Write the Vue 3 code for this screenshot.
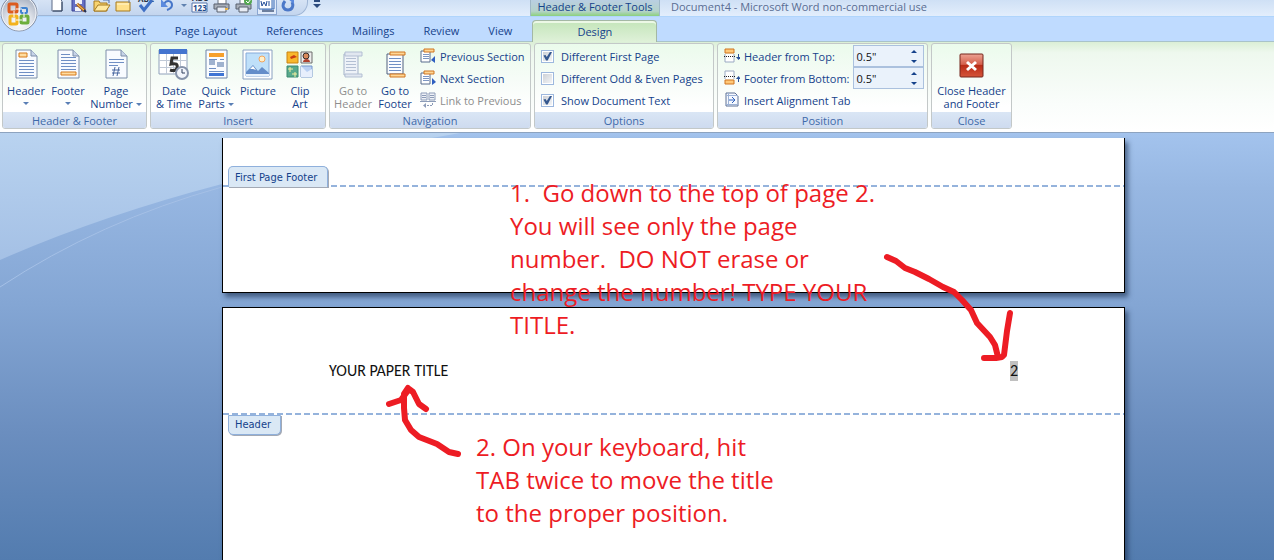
<script setup>
import { ref } from "vue";

const tabs = [
  "Home",
  "Insert",
  "Page Layout",
  "References",
  "Mailings",
  "Review",
  "View",
];

const options = ref([
  { id: "first-page", label: "Different First Page", checked: true },
  { id: "odd-even", label: "Different Odd & Even Pages", checked: false },
  { id: "show-text", label: "Show Document Text", checked: true },
]);

const notes = [
  {
    name: "one",
    lines: [
      "1.  Go down to the top of page 2.",
      "You will see only the page",
      "number.  DO NOT erase or",
      "change the number! TYPE YOUR",
      "TITLE.",
    ],
  },
  {
    name: "two",
    lines: [
      "2. On your keyboard, hit",
      "TAB twice to move the title",
      "to the proper position.",
    ],
  },
];

const headerTop = ref('0.5"');
const footerBottom = ref('0.5"');

const step = (value, delta) =>
  `${Math.max(0, Math.round((parseFloat(value) + delta) * 10) / 10)}"`;
</script>

<template>
  <div class="word">
    <header class="titlebar">
      <div class="quick">
        <button class="tool" aria-label="New">
          <svg width="16" height="16">
            <path d="M3 -2h7l3 3v10H3z" fill="#fff" stroke="#5c6b86" />
            <path d="M13 2v9H4" fill="none" stroke="#30435f" />
          </svg>
        </button>
        <button class="tool" aria-label="Save as">
          <svg width="16" height="16">
            <path d="M1 -1h13v12H1z" fill="#6670c4" stroke="#3b4593" />
            <path d="M4 -1h7v5H4zM4 7h6v4H4z" fill="#eef1fb" />
            <path d="M6 4l8 7" stroke="#b3691e" stroke-width="3" />
            <path d="M6 4l8 7" stroke="#ffd470" />
            <path d="M13 10l2 2" stroke="#243055" stroke-width="2" />
          </svg>
        </button>
        <button class="tool" aria-label="Open">
          <svg width="18" height="16">
            <path d="M1 11V1h5l1 2h7v8z" fill="#f8d36e" stroke="#a67a20" />
            <path d="M1 11l4-6h12l-4 6z" fill="#ffe9a0" stroke="#a67a20" />
            <path d="M10 0h6v3" fill="none" stroke="#4d6fae" />
          </svg>
        </button>
        <button class="tool" aria-label="Close file">
          <svg width="18" height="16">
            <path d="M1 11V2h14v9z" fill="#ffe08a" stroke="#a67a20" />
            <path d="M2 4h12" stroke="#fff5cf" />
            <path d="M8 -1h6v4" fill="none" stroke="#6b7b99" />
          </svg>
        </button>
        <button class="tool" aria-label="Spelling">
          <svg width="18" height="16">
            <text x="1" y="2" font-size="8" font-weight="700" fill="#2a3346">ABC</text>
            <path d="M3 5l4 5 8-10" fill="none" stroke="#3f6fc4" stroke-width="3" />
          </svg>
        </button>
        <button class="tool" aria-label="Undo">
          <svg width="18" height="16">
            <path d="M5 4c3-5 8-3 8 1 0 2-2 4-5 5" fill="none" stroke="#4776c9" stroke-width="2" />
            <path d="M2 -1v8h7z" fill="#5b8ade" />
          </svg>
        </button>
        <button class="tool narrow" aria-label="Undo history">
          <svg width="6" height="16">
            <path d="M0 4h6l-3 3z" fill="#6182b0" />
          </svg>
        </button>
        <button class="tool" aria-label="Word count">
          <svg width="18" height="16">
            <text x="1" y="1" font-size="8" font-weight="700" fill="#2a3346">ABC</text>
            <path d="M1 3h15v9H1z" fill="#fff" stroke="#5676ab" />
            <text x="2" y="11" font-size="8" font-weight="700" fill="#234a8a">123</text>
          </svg>
        </button>
        <button class="tool" aria-label="Quick print">
          <svg width="18" height="16">
            <path d="M5 -2h8v6H5z" fill="#fff" stroke="#68707e" />
            <path d="M1 4h15v5H1z" fill="#a9afb9" stroke="#59616e" />
            <path d="M4 7h9v5H4z" fill="#e8ecf4" stroke="#59616e" />
            <path d="M12 8h3v2h-3z" fill="#e9b44a" />
          </svg>
        </button>
        <button class="tool" aria-label="Print preview">
          <svg width="18" height="16">
            <path d="M5 -2h8v6H5z" fill="#fff" stroke="#68707e" />
            <path d="M1 4h15v5H1z" fill="#a9afb9" stroke="#59616e" />
            <path d="M4 7h9v5H4z" fill="#e8ecf4" stroke="#59616e" />
            <circle cx="13" cy="1" r="4" fill="#54a750" />
            <path d="M11 1l2 2 3-4" fill="none" stroke="#fff" />
          </svg>
        </button>
        <button class="tool pressed" aria-label="Word view">
          <svg width="18" height="16">
            <path d="M4 -2h12v11H4z" fill="#dbe7fa" stroke="#3b6ab3" />
            <path d="M1 -1h13v10H1z" fill="#fff" stroke="#3b6ab3" />
            <path d="M3 1l1 5 2-4 2 4 1-5M11 1v5" fill="none" stroke="#214c98" />
            <path d="M4 11h12" stroke="#6d7f9d" stroke-width="2" />
          </svg>
        </button>
        <button class="tool" aria-label="Repeat">
          <svg width="18" height="16">
            <path d="M4 1c-4 5-1 9 3 9s6-4 4-8" fill="none" stroke="#4c78c8" stroke-width="3" />
            <path d="M6 -2h7v6z" fill="#5b8ade" />
          </svg>
        </button>
      </div>
      <button class="customize" aria-label="Customize toolbar">
        <svg width="8" height="10">
          <path d="M1 1h6" stroke="#2b4a7d" stroke-width="2" />
          <path d="M0 4h8l-4 4z" fill="#2b4a7d" />
        </svg>
      </button>
      <span class="context">Header &amp; Footer Tools</span>
      <h1 class="title">Document4 - Microsoft Word non-commercial use</h1>
    </header>

    <button class="office" aria-label="Office button">
      <svg width="40" height="40" viewBox="0 0 40 40">
        <defs>
          <radialGradient id="orb" cx="50%" cy="75%" r="70%">
            <stop offset="0" stop-color="#fff" />
            <stop offset="0.5" stop-color="#dfe3ea" />
            <stop offset="1" stop-color="#a7b0c0" />
          </radialGradient>
        </defs>
        <circle cx="20" cy="20" r="18" fill="url(#orb)" stroke="#8590a5" />
        <circle cx="20" cy="20" r="17" fill="none" stroke="#f6f8fb" />
        <g fill="none" stroke-width="3">
          <rect x="10" y="11" width="8" height="8" rx="1" stroke="#dc5a1e" />
          <rect x="22" y="15" width="6" height="5" rx="1" stroke="#3f82cf" stroke-width="2" />
          <rect x="11" y="23" width="7" height="8" rx="1" stroke="#f3b21d" />
          <rect x="22" y="23" width="7" height="7" rx="1" stroke="#6cae3c" />
        </g>
        <path d="M17 16h6M17 27h6M15 18v6M25 19v5" stroke="#fff" />
      </svg>
    </button>

    <nav class="tabs">
      <button v-for="tab in tabs" :key="tab" class="tab">{{ tab }}</button>
      <button class="tab active">Design</button>
    </nav>

    <main class="ribbon">
      <section class="group g-hf">
        <div class="body">
          <button class="big">
            <svg width="32" height="32">
              <path d="M6 1h15l6 6v22H6z" fill="#f8fbff" stroke="#7d8ea9" />
              <path d="M21 1v6h6" fill="#c7d4e8" stroke="#7d8ea9" />
              <path d="M9 4h8v4H9z" fill="#ffdca0" stroke="#d77b1b" />
              <path d="M9 11.500h15M9 14.500h15M9 17.500h15M9 20.500h15M9 23.500h15M9 26.500h15" stroke="#6f8fc4" />
            </svg>
            <span>Header</span>
            <i class="caret"></i>
          </button>
          <button class="big">
            <svg width="32" height="32">
              <path d="M6 1h15l6 6v22H6z" fill="#f8fbff" stroke="#7d8ea9" />
              <path d="M21 1v6h6" fill="#c7d4e8" stroke="#7d8ea9" />
              <path d="M9 5.500h9M9 8.500h15M9 11.500h15M9 14.500h15M9 17.500h15M9 20.500h15" stroke="#6f8fc4" />
              <path d="M9 23h15v3H9z" fill="#ffdca0" stroke="#d77b1b" />
            </svg>
            <span>Footer</span>
            <i class="caret"></i>
          </button>
          <button class="big wide">
            <svg width="32" height="32">
              <path d="M6 1h15l6 6v22H6z" fill="#f8fbff" stroke="#7d8ea9" />
              <path d="M21 1v6h6" fill="#c7d4e8" stroke="#7d8ea9" />
              <path d="M9 10.500h15M9 13.500h15M9 16.500h9" stroke="#6f8fc4" />
              <path d="M15 18l-2 9M19 18l-2 9M12 21h8M12 24h8" stroke="#48679f" />
            </svg>
            <span>Page</span>
            <span>Number<i class="caret side"></i></span>
          </button>
        </div>
        <h2>Header &amp; Footer</h2>
      </section>

      <section class="group g-insert">
        <div class="body">
          <button class="big">
            <svg width="32" height="32">
              <path d="M1 1h28v24H1z" fill="#fff" stroke="#8fa0ba" />
              <path d="M1 0h28v5H1z" fill="#4474cf" />
              <path d="M1 11.500h28M1 18.500h28M8.500 5v20M15.500 5v20M22.500 5v20" stroke="#c0c9d6" />
              <path d="M20 9h-6l-1 6c5-1 7 0 6 4-1 3-4 3-7 2" fill="none" stroke="#323232" stroke-width="3" />
              <circle cx="24" cy="24" r="6" fill="#f2f5fb" stroke="#8693aa" stroke-width="2" />
              <path d="M24 20v4h3" fill="none" stroke="#2f3f5d" />
            </svg>
            <span>Date</span>
            <span>&amp; Time</span>
          </button>
          <button class="big">
            <svg width="32" height="32">
              <path d="M6 1h21v28H6z" fill="#fafcff" stroke="#6d83a8" />
              <path d="M9 4h15v4H9z" fill="#f6a02d" />
              <path d="M9 10.500h8M9 13.500h4M20 10.500h4M9 19.500h7M9 22.500h15" stroke="#6f8fc4" />
              <path d="M9 11h6v5H9zM17 13h7v5h-7z" fill="#9fb2cf" />
              <path d="M9 24h15v3H9z" fill="#3f74d4" />
            </svg>
            <span>Quick</span>
            <span>Parts<i class="caret side"></i></span>
          </button>
          <button class="big">
            <svg width="32" height="32">
              <path d="M1 1h29v29H1z" fill="#fff" stroke="#8aa0c0" />
              <path d="M4 4h23v23H4z" fill="#bfe0fa" stroke="#86aad8" />
              <circle cx="20" cy="10" r="3" fill="#fff0cb" stroke="#f2a55e" />
              <path d="M4 23l7-7 5 6 4-4 7 6v3H4z" fill="#648dc9" />
              <path d="M8 20l3-3 3 4-3-1z" fill="#fff" />
              <path d="M4 25h23v2H4z" fill="#e6f1fc" />
            </svg>
            <span>Picture</span>
          </button>
          <button class="big">
            <svg width="32" height="32">
              <path d="M3 3h11v11H3z" fill="#f9b82c" stroke="#c98212" />
              <path d="M6 8l4-2 3 2-6 2z" fill="#c93e13" />
              <path d="M17 3h11v11H17z" fill="#ececec" stroke="#6d6d6d" />
              <circle cx="22" cy="7" r="3" fill="#d98a5c" stroke="#382e2a" />
              <path d="M19 13c0-4 7-4 7 0z" fill="#b0402c" />
              <path d="M3 17h11v11H3z" fill="#58a98c" stroke="#3b8a70" />
              <path d="M6 18v5M4 20h5M11 23v5M8 25h5" stroke="#f5ef9f" />
              <path d="M17 17h11v11H17z" fill="#b9d0f3" stroke="#7495cc" />
              <path d="M17 17l6 6 5-3v8H17z" fill="#e7effc" />
            </svg>
            <span>Clip</span>
            <span>Art</span>
          </button>
        </div>
        <h2>Insert</h2>
      </section>

      <section class="group g-nav">
        <div class="body">
          <button class="big" disabled>
            <svg width="32" height="32">
              <path d="M7 5h14v21H7z" fill="#eef2f8" stroke="#a3b1c8" />
              <path d="M9 9.500h10M9 12.500h10M9 15.500h10M9 18.500h10M9 21.500h10" stroke="#b3bfd3" />
              <path d="M8 3h17v4H8zM8 25h17v3H8z" fill="#e1e7f0" stroke="#b3bfd3" />
            </svg>
            <span>Go to</span>
            <span>Header</span>
          </button>
          <button class="big">
            <svg width="32" height="32">
              <path d="M8 5h16v20H8z" fill="#fafcff" stroke="#50617f" />
              <path d="M10 9.500h12M10 12.500h12M10 15.500h12M10 18.500h12M10 21.500h12" stroke="#6f8fc4" />
              <path d="M11 3h15v3H11zM11 25h15v3H11z" fill="#ffd795" stroke="#cf7520" />
            </svg>
            <span>Go to</span>
            <span>Footer</span>
          </button>
          <div class="rows">
            <button class="row">
              <svg width="16" height="16">
                <path d="M1 3h9v11H1z" fill="#fff" stroke="#596c8d" />
                <path d="M3 6.500h6M3 8.500h6M3 10.500h6" stroke="#7d96c2" />
                <path d="M4 1h10v3H4z" fill="#ffd795" stroke="#cf7520" />
                <path d="M15 8v7l-4-3z" fill="#2f5fc0" />
              </svg>
              Previous Section
            </button>
            <button class="row">
              <svg width="16" height="16">
                <path d="M1 3h9v11H1z" fill="#fff" stroke="#596c8d" />
                <path d="M3 6.500h6M3 8.500h6M3 10.500h6" stroke="#7d96c2" />
                <path d="M4 1h10v3H4z" fill="#ffd795" stroke="#cf7520" />
                <path d="M12 8v7l4-3z" fill="#2f5fc0" />
              </svg>
              Next Section
            </button>
            <button class="row" disabled>
              <svg width="16" height="16">
                <path d="M1 1h6v7H1zM9 1h6v7H9z" fill="#eef1f6" stroke="#8d9cb8" />
                <path d="M2 3.500h4M2 5.500h4M10 3.500h4M10 5.500h4M0 9.500h16" stroke="#8d9cb8" />
                <path d="M12.500 11v2.500H4" fill="none" stroke="#8d9cb8" stroke-dasharray="2 1" />
                <path d="M6 11v5l-3-2.500z" fill="#8d9cb8" />
              </svg>
              Link to Previous
            </button>
          </div>
        </div>
        <h2>Navigation</h2>
      </section>

      <section class="group g-options">
        <div class="body">
          <div class="rows">
            <label v-for="opt in options" :key="opt.id" class="row" :for="opt.id">
              <input :id="opt.id" v-model="opt.checked" type="checkbox" />
              {{ opt.label }}
            </label>
          </div>
        </div>
        <h2>Options</h2>
      </section>

      <section class="group g-position">
        <div class="body">
          <div class="rows">
            <div class="row">
              <svg width="16" height="16">
                <path d="M1 1h9v4H1z" fill="#ffc878" stroke="#cf7520" />
                <path d="M1 6v8h9V6" fill="#fff" stroke="#9aa9c2" />
                <path d="M0 8.500h12" stroke="#222" stroke-dasharray="1 1" />
                <path d="M14.500 6v3" stroke="#2a5199" />
                <path d="M12 9h5l-2.500 3z" fill="#2a5199" />
              </svg>
              <label for="header-top">Header from Top:</label>
              <div class="spin">
                <input id="header-top" v-model="headerTop" type="text" />
                <div class="arrows">
                  <button aria-label="More" @click="headerTop = step(headerTop, 0.1)">
                    <i class="up"></i>
                  </button>
                  <button aria-label="Less" @click="headerTop = step(headerTop, -0.1)">
                    <i class="down"></i>
                  </button>
                </div>
              </div>
            </div>
            <div class="row">
              <svg width="16" height="16">
                <path d="M1 9V1h9v8" fill="#fff" stroke="#9aa9c2" />
                <path d="M1 10h9v4H1z" fill="#ffc878" stroke="#cf7520" />
                <path d="M0 6.500h12" stroke="#222" stroke-dasharray="1 1" />
                <path d="M14.500 9v3" stroke="#2a5199" />
                <path d="M12 9h5l-2.500-3z" fill="#2a5199" />
              </svg>
              <label for="footer-bottom">Footer from Bottom:</label>
              <div class="spin">
                <input id="footer-bottom" v-model="footerBottom" type="text" />
                <div class="arrows">
                  <button aria-label="More" @click="footerBottom = step(footerBottom, 0.1)">
                    <i class="up"></i>
                  </button>
                  <button aria-label="Less" @click="footerBottom = step(footerBottom, -0.1)">
                    <i class="down"></i>
                  </button>
                </div>
              </div>
            </div>
            <button class="row">
              <svg width="16" height="16">
                <path d="M2 1h9l3 3v10H2z" fill="#f6f9ff" stroke="#5d7095" />
                <path d="M4.500 1v13M2 3.500h12M2 12.500h12" stroke="#9db2d5" />
                <path d="M5 8h6M8 5l3 3-3 3" fill="none" stroke="#2f62bd" />
              </svg>
              Insert Alignment Tab
            </button>
          </div>
        </div>
        <h2>Position</h2>
      </section>

      <section class="group g-close">
        <div class="body">
          <button class="big">
            <svg width="32" height="32">
              <defs>
                <linearGradient id="red" x1="0" y1="0" x2="0" y2="1">
                  <stop offset="0" stop-color="#eda393" />
                  <stop offset="0.45" stop-color="#d4604c" />
                  <stop offset="0.5" stop-color="#b92c17" />
                  <stop offset="1" stop-color="#d5553a" />
                </linearGradient>
              </defs>
              <rect x="4" y="5" width="23" height="23" rx="1" fill="url(#red)" stroke="#74261c" />
              <path d="M11 13l9 8M20 13l-9 8" stroke="#fff" stroke-width="3" />
            </svg>
            <span>Close Header</span>
            <span>and Footer</span>
          </button>
        </div>
        <h2>Close</h2>
      </section>
    </main>

    <div class="workspace">
      <svg class="swoosh" viewBox="0 0 900 430" width="900" height="430">
        <defs>
          <linearGradient id="sky" x1="0" y1="0" x2="0" y2="130" gradientUnits="userSpaceOnUse">
            <stop offset="0" stop-color="#b9d3f0" />
            <stop offset="1" stop-color="#a4c0e5" />
          </linearGradient>
        </defs>
        <path d="M0 0H460Q340 20 222 51Q100 83 0 127z" fill="url(#sky)" />
        <path d="M0 154Q100 88 222 54" fill="none" stroke="#a5c0e6" />
      </svg>

      <article class="page first">
        <div class="mark bottom"><span>First Page Footer</span></div>
      </article>
      <article class="page second">
        <div class="running">
          <span>YOUR PAPER TITLE</span>
          <span class="number">2</span>
        </div>
        <div class="mark top"><span>Header</span></div>
      </article>

      <p v-for="note in notes" :key="note.name" class="note" :class="note.name">
        <span v-for="line in note.lines" :key="line">{{ line }}</span>
      </p>

      <svg class="ink" viewBox="0 0 1274 427" width="1274" height="427">
        <path
          d="M887 124l9 4 9 7 10 4 14 7 14 8 11 5 8 8 9 10 6 13 13 14 5 8 3 12M1010 180l-3 18-3 24-2 2-6 1h-12"
        />
        <path d="M458 321l-9-2-12-8-18-7-8-7-6-10-1-12v-14l4-6M389 271l12-4 8-11 4 3 6 12 7 5" />
      </svg>
    </div>
  </div>
</template>

<style>
body {
  margin: 0;
}
</style>

<style scoped>
.word {
  position: relative;
  display: flex;
  flex-direction: column;
  min-height: 100vh;
  overflow: hidden;
  font-family: "Segoe UI", "Open Sans", sans-serif;
  font-size: 11px;
  color: #15428b;
}
.word * {
  box-sizing: border-box;
}
button {
  margin: 0;
  padding: 0;
  border: 0;
  background: none;
  font: inherit;
  color: inherit;
}
svg {
  display: block;
  flex: none;
}

/* title bar */
.titlebar {
  display: flex;
  height: 17px;
  background: linear-gradient(#cfe0f5, #e3eefc);
  border-bottom: 1px solid #b0d5fc;
}
.quick {
  display: flex;
  gap: 4px;
  width: 270px;
  height: 16px;
  margin-left: 38px;
  padding-left: 11px;
  background: linear-gradient(#d6e3f5, #c3d5ee);
  border-right: 1px solid #9fb6d6;
  border-bottom: 1px solid #9fb6d6;
  border-bottom-right-radius: 14px;
}
.tool {
  flex: none;
  width: 18px;
  height: 15px;
  overflow: hidden;
}
.tool.narrow {
  width: 6px;
}
.tool.pressed {
  width: 20px;
  background: #dfeafa;
  border: 1px solid #8ba7d2;
  border-top: 0;
}
.customize {
  display: flex;
  width: 16px;
  height: 10px;
  margin-left: 1px;
}
.customize svg {
  margin: 0 auto;
}
.context {
  width: 130px;
  margin-left: 205px;
  background: linear-gradient(#b9cfe2, #b5d3ca 70%, #8cd07c);
  border: solid #9fb8c8;
  border-width: 0 1px;
  line-height: 13px;
  text-align: center;
  white-space: nowrap;
}
.title {
  margin: 0 0 0 11px;
  font-size: 11px;
  font-weight: 400;
  line-height: 13px;
  color: #5a6d93;
  white-space: nowrap;
}
.office {
  position: absolute;
  left: -1px;
  top: -7px;
}

/* tabs */
.tabs {
  display: flex;
  gap: 1px;
  height: 25px;
  padding: 3px 0 0 42px;
  background: #bfdbff;
  border-bottom: 1px solid #a9c3c9;
}
.tab {
  padding: 0 14px;
  line-height: 22px;
}
.tab.active {
  width: 125px;
  height: 22px;
  margin-left: 5px;
  background: linear-gradient(#c4e5ba, #dff1d9);
  border: 1px solid #a4b8a4;
  border-bottom: 0;
  border-radius: 4px 4px 0 0;
  box-shadow: inset 0 2px 0 #ecf8e6;
  line-height: 20px;
}

/* ribbon */
.ribbon {
  display: flex;
  gap: 3px;
  padding: 1px 2px 2px;
  background: linear-gradient(#dbefd6, #eef8ee 12%, #fafdfb 70%, #fff);
  border-bottom: 1px solid #fff;
}
.group {
  display: flex;
  flex: none;
  flex-direction: column;
  height: 86px;
  background: linear-gradient(#ebfbec, #f7fcf8 45%, #fff 75%);
  border: 1px solid #c3c8c8;
  border-radius: 3px;
  overflow: hidden;
}
.g-hf {
  width: 145px;
}
.g-insert {
  width: 176px;
}
.g-nav {
  width: 202px;
}
.g-options {
  width: 180px;
}
.g-position {
  width: 211px;
}
.g-close {
  width: 81px;
}
.body {
  display: flex;
  flex: 1;
  padding: 1px 2px 0;
}
.group h2 {
  height: 16px;
  margin: 0;
  background: linear-gradient(#dae6f5, #cedbef);
  font-size: 11px;
  font-weight: 400;
  line-height: 18px;
  text-align: center;
  color: #3e6aaa;
}
.big {
  display: flex;
  flex: none;
  flex-direction: column;
  align-items: center;
  width: 42px;
  padding-top: 4px;
  line-height: 13px;
  white-space: nowrap;
}
.big svg {
  margin-bottom: 3px;
}
.big.wide {
  width: 54px;
}
.g-close .big {
  width: 100%;
}
button:disabled {
  color: #8d8d8d;
}
.caret {
  width: 0;
  margin-top: 5px;
  border: 3px solid transparent;
  border-top-color: #5a7fb5;
  border-bottom: 0;
}
.caret.side {
  display: inline-block;
  margin: 0 0 2px 3px;
}
.rows {
  display: flex;
  flex-direction: column;
  flex: 1;
}
.row {
  display: flex;
  align-items: center;
  gap: 4px;
  height: 22px;
  padding-left: 4px;
  white-space: nowrap;
}
.g-options .row {
  gap: 7px;
}
.g-position .rows {
  padding-right: 2px;
}
input[type="checkbox"] {
  position: relative;
  flex: none;
  width: 13px;
  height: 13px;
  margin: 0;
  appearance: none;
  background: linear-gradient(135deg, #c9cdd3, #f7f8fa);
  border: 1px solid #9db8de;
  box-shadow: inset 0 0 0 1px #fff;
}
input[type="checkbox"]:checked::after {
  content: "";
  position: absolute;
  inset: 1px;
  background: #35588f;
  clip-path: polygon(5% 45%, 28% 40%, 42% 62%, 80% 0, 100% 5%, 52% 100%, 34% 100%);
}
.spin {
  display: flex;
  width: 71px;
  height: 22px;
  margin-left: auto;
  background: #eaf2fb;
  border: 1px solid #abc1de;
}
.spin input {
  flex: 1;
  min-width: 0;
  padding: 0 2px;
  border: 0;
  background: none;
  font: inherit;
  color: #111;
}
.arrows {
  display: flex;
  flex-direction: column;
  width: 18px;
}
.arrows button {
  display: flex;
  flex: 1;
  align-items: center;
  justify-content: center;
}
.up,
.down {
  border: 3px solid transparent;
}
.up {
  border-top: 0;
  border-bottom-color: #15428b;
}
.down {
  border-bottom: 0;
  border-top-color: #15428b;
}

/* document area */
.workspace {
  position: relative;
  display: flex;
  flex: 1;
  flex-direction: column;
  gap: 14px;
  padding: 5px 149px 0 222px;
  background: linear-gradient(#a3c3ed, #97b7e2 13%, #84a6d4 40%, #6b8ebf 70%, #537caf);
  border-top: 1px solid #8da3bf;
}
.swoosh {
  position: absolute;
  left: 0;
  top: 0;
}
.page {
  position: relative;
  background: #fff;
  border: 1px solid #000;
  box-shadow: 3px 4px 5px rgba(20, 40, 70, 0.6);
}
.page.first {
  height: 155px;
  padding-top: 28px;
  border-top: 0;
}
.page.second {
  flex: 1;
  min-height: 250px;
  border-bottom: 0;
}
.mark {
  display: flex;
  padding-left: 5px;
  font-family: Tahoma, "DejaVu Sans Condensed", "DejaVu Sans", sans-serif;
  font-size: 11px;
  line-height: 18px;
}
.mark span {
  padding: 0 9px 0 6px;
  background: #dae8f5;
  border: 1px solid #8fb0dc;
  box-shadow: 1px 1px 0 #a3a9b4;
}
.mark.bottom {
  background: repeating-linear-gradient(90deg, #95b3dc 0 6px, transparent 6px 9px) bottom / 100% 2px no-repeat;
}
.mark.bottom span {
  padding-top: 2px;
  padding-right: 10px;
  border-bottom: 0;
  border-radius: 5px 5px 0 0;
}
.mark.top {
  padding-top: 2px;
  background: repeating-linear-gradient(90deg, #95b3dc 0 6px, transparent 6px 9px) top / 100% 2px no-repeat;
}
.mark.top span {
  border-radius: 0 0 5px 5px;
}
.running {
  display: flex;
  justify-content: space-between;
  height: 105px;
  padding: 53px 106px 0;
  font-family: Calibri, "Open Sans", sans-serif;
  font-size: 16px;
  line-height: 20px;
  color: #111;
}
.number {
  height: 20px;
  background: #c0c0c0;
}

/* handwritten notes over the pages */
.note {
  position: absolute;
  margin: 0;
  font-family: "Comic Sans MS", "Open Sans", sans-serif;
  font-size: 24px;
  line-height: 33px;
  color: #ed1c24;
  white-space: pre;
}
.note span {
  display: block;
}
.note.one {
  left: 510px;
  top: 43px;
}
.note.two {
  left: 476px;
  top: 297px;
}
.ink {
  position: absolute;
  left: 0;
  top: 0;
  fill: none;
  stroke: #ed1c24;
  stroke-width: 6px;
  stroke-linecap: round;
  stroke-linejoin: round;
  pointer-events: none;
}
</style>
